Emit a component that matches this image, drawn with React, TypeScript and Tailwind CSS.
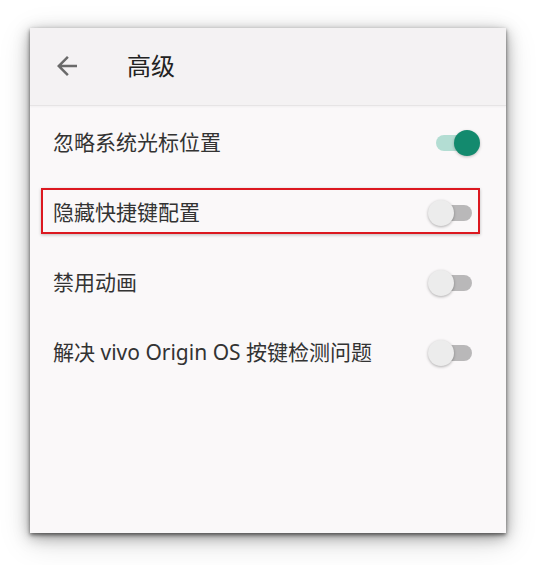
import React from "react";

interface ToggleProps {
  on: boolean;
}

const Toggle = ({ on }: ToggleProps) => {
  return (
    <div className="relative h-[16px] w-[36px] shrink-0">
      <div
        className={`absolute inset-0 rounded-full ${on ? "bg-[#b3ddd3]" : "bg-[#b9b8b9]"}`}
      ></div>
      <div
        className={`absolute top-[-5px] h-[26px] w-[26px] rounded-full ${
          on
            ? "right-[-8px] bg-[#138a6e] shadow-[0_1px_3px_rgba(0,0,0,0.25)]"
            : "left-[-8px] bg-[#ececec] shadow-[0_1px_3px_rgba(0,0,0,0.3)]"
        }`}
      ></div>
    </div>
  );
};

const rows = [
  { text: "忽略系统光标位置", on: true, marked: false },
  { text: "隐藏快捷键配置", on: false, marked: true },
  { text: "禁用动画", on: false, marked: false },
  { text: "解决 vivo Origin OS 按键检测问题", on: false, marked: false },
];

const App = () => {
  return (
    <div
      className="h-[565px] w-[536px] overflow-hidden bg-white pl-[30px] pt-[28px]"
      style={{ fontFamily: "'Noto Sans', 'Noto Sans CJK SC', sans-serif" }}
    >
      <div className="flex h-[505px] w-[476px] flex-col bg-[#faf8f9] shadow-[0_2px_4px_rgba(0,0,0,0.55),0_4px_14px_rgba(0,0,0,0.35),0_8px_30px_rgba(0,0,0,0.15)]">
        <header className="flex h-[78px] items-center border-b border-[#e6e4e5] bg-[#f4f2f3] pb-[2px] shadow-[0_1px_2px_rgba(0,0,0,0.04)]">
          <svg
            viewBox="0 0 24 24"
            className="ml-[22px] h-[30px] w-[30px] fill-[#6a6a6a]"
          >
            <path d="M20 11H7.83l5.59-5.59L12 4l-8 8 8 8 1.41-1.41L7.83 13H20v-2z" />
          </svg>
          <h1 className="ml-[45px] text-[24px] font-normal text-[#222]">高级</h1>
        </header>
        <div className="flex flex-col pt-[2px]">
          {rows.map((row) => (
            <div
              key={row.text}
              className="relative flex h-[70px] items-center justify-between pl-[23px] pr-[34px]"
            >
              <span className="text-[21px] text-[#333]">{row.text}</span>
              <Toggle on={row.on} />
              {row.marked && (
                <div className="absolute left-[11px] top-[10px] h-[46px] w-[439px] border-2 border-[#dc1820] shadow-[0_1px_3px_rgba(0,0,0,0.25)]"></div>
              )}
            </div>
          ))}
        </div>
      </div>
    </div>
  );
};

export default App;
